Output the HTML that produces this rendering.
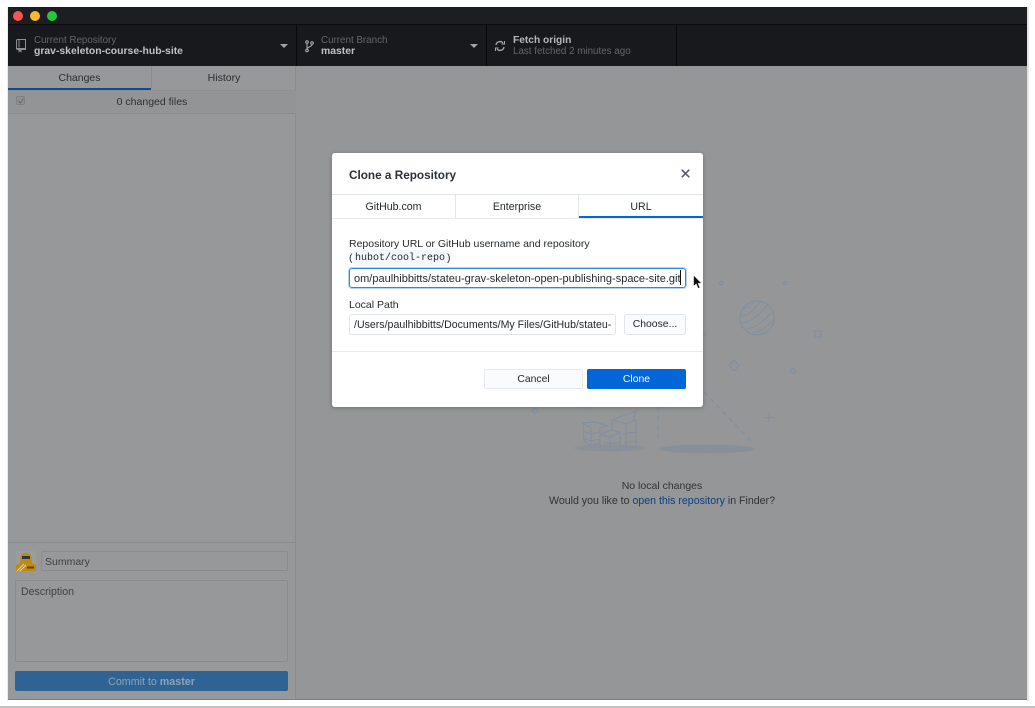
<!DOCTYPE html>
<html><head><meta charset="utf-8"><style>
*{box-sizing:border-box}
html,body{margin:0;padding:0;width:1035px;height:708px;overflow:hidden;background:#fff;font-family:"Liberation Sans",sans-serif}
.a{position:absolute;white-space:nowrap}
svg{position:absolute;overflow:visible}
</style></head><body>
<div class="a" style="left:0;top:706px;width:1035px;height:2px;background:#c4c4c4"></div>
<div class="a" style="left:1027px;top:7px;width:2px;height:694px;background:#e4e4e4"></div>
<div class="a" style="left:7px;top:7px;width:1px;height:694px;background:#ececec"></div>
<div class="a" id="win" style="left:8px;top:7px;width:1019px;height:693px;background:#959697;overflow:hidden">
<div class="a" style="left:0;top:0;width:1019px;height:17px;background:#1c1e22"></div>
<div class="a" style="left:0;top:17px;width:1019px;height:42px;background:#17191d;border-top:1px solid #0a0b0d"></div>
<div class="a" style="left:5px;top:4px;width:10px;height:10px;border-radius:50%;background:#f5554f"></div>
<div class="a" style="left:22px;top:4px;width:10px;height:10px;border-radius:50%;background:#f9bb2d"></div>
<div class="a" style="left:39px;top:4px;width:10px;height:10px;border-radius:50%;background:#27c63f"></div>
<div class="a" style="left:288px;top:17px;width:1px;height:42px;background:#08090a"></div>
<div class="a" style="left:478px;top:17px;width:1px;height:42px;background:#08090a"></div>
<div class="a" style="left:668px;top:17px;width:1px;height:42px;background:#08090a"></div>

<svg style="left:8px;top:32px" width="10" height="13" viewBox="0 0 10 13" fill="none" stroke="#8e9094" stroke-width="1"><path d="M.5 10V1.500a1 1 0 0 1 1-1h8v10h-9M3 .5v8M.5 9.500h9M3 10.500v2l1-1 1 1v-2"/></svg>
<div class="a" style="left:26px;top:28px;font-size:9.800px;line-height:12px;color:#63666b">Current Repository</div>
<div class="a" style="left:26px;top:38px;font-size:10.400px;line-height:13px;font-weight:bold;color:#c0c2c5">grav-skeleton-course-hub-site</div>
<div class="a" style="left:272px;top:37px;border:4px solid transparent;border-top:4px solid #a3a5a8;border-bottom:0"></div>
<svg style="left:297px;top:33px" width="9" height="13" viewBox="0 0 9 13" fill="none" stroke="#b0b2b5" stroke-width="1"><circle cx="2" cy="2" r="1.300"/><circle cx="7" cy="3" r="1.300"/><circle cx="2" cy="10.500" r="1.300"/><path d="M2 3.500v5.500M7 4.500c0 2.500-4.500 2-5 4.500"/></svg>
<div class="a" style="left:313px;top:28px;font-size:9.800px;line-height:12px;color:#63666b">Current Branch</div>
<div class="a" style="left:313px;top:38px;font-size:10.400px;line-height:13px;font-weight:bold;color:#c0c2c5">master</div>
<div class="a" style="left:462px;top:37px;border:4px solid transparent;border-top:4px solid #a3a5a8;border-bottom:0"></div>
<svg style="left:487px;top:33px" width="10" height="12" viewBox="0 0 10 12" fill="none" stroke="#a8aaad" stroke-width="1.300"><path d="M1 5A4 4 0 0 1 8 3M9 7A4 4 0 0 1 2 9"/><path d="M6.500 4H9.500V1M3.500 8H.5v3" stroke-width="1"/></svg>
<div class="a" style="left:505px;top:27px;font-size:10.200px;line-height:13px;font-weight:bold;color:#b6b8bb">Fetch origin</div>
<div class="a" style="left:505px;top:39px;font-size:9.800px;line-height:12px;color:#63666b">Last fetched 2 minutes ago</div>

<div class="a" style="left:0;top:59px;width:288px;height:634px;background:#979899;border-right:1px solid #8a8b8c"></div>
<div class="a" style="left:143px;top:59px;width:1px;height:23px;background:#8a8b8c"></div>
<div class="a" style="left:0;top:60px;width:143px;height:23px;text-align:center;font-size:10.500px;line-height:23px;color:#2b2c2e">Changes</div>
<div class="a" style="left:144px;top:60px;width:144px;height:23px;text-align:center;font-size:10.500px;line-height:23px;color:#2b2c2e">History</div>
<div class="a" style="left:0;top:81px;width:143px;height:2px;background:#0e4c92"></div>
<div class="a" style="left:0;top:83px;width:288px;height:24px;background:#939495;border-top:1px solid #8e8f90;border-bottom:1px solid #8a8b8c;text-align:center;font-size:10.500px;line-height:22px;color:#2f3032">0 changed files</div>
<div class="a" style="left:8px;top:89px;width:9px;height:9px;border:1px solid #808183;border-radius:2px;background:#8f9091"></div>
<svg style="left:9px;top:90px" width="8" height="8" viewBox="0 0 8 8" fill="none" stroke="#67686a"><path d="M1.500 4l2 2 3-4.500"/></svg>

<div class="a" style="left:0;top:535px;width:288px;height:1px;background:#8a8b8c"></div>
<div class="a" style="left:8px;top:544px;width:20px;height:20px;background:#9c9c9b;border-radius:2px"></div>
<svg style="left:8px;top:544px" width="20" height="20" viewBox="0 0 20 20"><path d="M5 4Q10 0 15 4L16 13H4Z" fill="#bd8a12"/><rect x="6" y="5" width="8" height="3" fill="#2f3440"/><path d="M0 20V14L5 12H15L20 14V20Z" fill="#bd8a12"/><path d="M1 20L8 13M4 20L10 14" stroke="#d8d4c4" stroke-width="1"/><rect x="11" y="15.500" width="7" height="2" fill="#5a470f"/></svg>
<div class="a" style="left:33px;top:544px;width:247px;height:20px;background:#979899;border:1px solid #8a8b8c;border-radius:2px;font-size:10.500px;line-height:20px;padding-left:3px;color:#3f4042">Summary</div>
<div class="a" style="left:7px;top:573px;width:273px;height:82px;background:#979899;border:1px solid #8a8b8c;border-radius:2px;font-size:10.600px;line-height:13px;padding:5px 5px;color:#3f4042">Description</div>
<div class="a" style="left:7px;top:664px;width:273px;height:20px;background:#2f6393;border-radius:2px;text-align:center;font-size:10.700px;line-height:22px;color:#8da4b9">Commit to <b>master</b></div>

<svg style="left:504px;top:262px" width="320" height="190" viewBox="512 269 320 190" fill="none" stroke="#7e8fa3" stroke-width="1">
<ellipse cx="707" cy="449" rx="48" ry="4.500" fill="#889097" stroke="none"/>
<ellipse cx="610" cy="448" rx="36" ry="3.500" fill="#8c9196" stroke="none"/>
<circle cx="721" cy="283" r="1.700"/><circle cx="785" cy="283" r="1.500"/><circle cx="704" cy="334" r="1.500"/>
<circle cx="757" cy="318" r="17"/><path d="M743 309q6-1 12-9M741 316q10-1 20-15M742 323q12-1 25-18M746 329q12-1 25-16M753 333q10-2 19-12" stroke-width=".8"/>
<rect x="815" y="331" width="6" height="6"/><path d="M813 331h3M820 331h3M813 337h3M820 337h3" stroke-width=".7"/>
<path d="M734 360l5 5.500-5 5.500-5-5.500zM793 368l3 3-3 3-3-3zM535 408l3 3-3 3-3-3z"/>
<path d="M769 413v9M765 417.500h9"/>
<path d="M658 407v32M704 392l47 49" stroke-dasharray="5 4"/>
<path d="M580 407h3M588 408h3"/>
<path d="M583 423l13-1 11 4-7 2v15l-9 3-7-5zM583 423l8 5v18M583 431l8 3 9-2M583 438l8 3 9-2"/>
<path d="M600 435l10-5 10 2v18l-10 1-10-2zM600 435l10 2 10-5M610 437v14M603 443h16"/>
<path d="M612 420l24-9-3 9 3 0v27l-10 2M612 420l14 4 10-4M612 420v10M626 424v26M622 434l14-2M624 443l12-2"/>
</svg>
<div class="a" style="left:514px;top:472px;width:280px;text-align:center;font-size:10.500px;line-height:14px;color:#303234">No local changes</div>
<div class="a" style="left:514px;top:487px;width:280px;text-align:center;font-size:10.600px;line-height:14px;color:#303234">Would you like to <span style="color:#0b3f80">open this repository</span> in Finder?</div>
<div class="a" style="left:0;top:692px;width:1019px;height:1px;background:#7d7e7f"></div>
</div>

<div class="a" style="left:332px;top:153px;width:371px;height:254px;background:#fff;border-radius:3px;box-shadow:0 1px 4px rgba(0,0,0,.25)">
<div class="a" style="left:17px;top:15px;font-size:11.750px;line-height:15px;font-weight:bold;color:#2b3036">Clone a Repository</div>
<svg style="left:349px;top:16px" width="9" height="9" viewBox="0 0 9 9" stroke="#555b62" stroke-width="1.500"><path d="M.7.7l7.600 7.600M8.300.7L.7 8.300"/></svg>
<div class="a" style="left:0;top:41px;width:371px;height:1px;background:#e1e4e8"></div>
<div class="a" style="left:0;top:65px;width:371px;height:1px;background:#e8eaed"></div>
<div class="a" style="left:123px;top:41px;width:1px;height:24px;background:#e1e4e8"></div>
<div class="a" style="left:246px;top:41px;width:1px;height:24px;background:#e1e4e8"></div>
<div class="a" style="left:0;top:43px;width:123px;height:23px;text-align:center;font-size:10.600px;line-height:23px;color:#24292e">GitHub.com</div>
<div class="a" style="left:124px;top:43px;width:122px;height:23px;text-align:center;font-size:10.600px;line-height:23px;color:#24292e">Enterprise</div>
<div class="a" style="left:247px;top:43px;width:124px;height:23px;text-align:center;font-size:10.600px;line-height:23px;color:#24292e">URL</div>
<div class="a" style="left:247px;top:63px;width:124px;height:2px;background:#0366d6"></div>
<div class="a" style="left:17px;top:84px;font-size:10.500px;line-height:14px;color:#24292e">Repository URL or GitHub username and repository</div>
<div class="a" style="left:17px;top:98px;font-size:10.500px;line-height:14px;color:#24292e">(</div>
<div class="a" style="left:22px;top:97px;width:95px;height:16px;background:#f4f8fb;border-radius:3px;font-family:'Liberation Mono',monospace;font-size:10px;line-height:17px;padding-left:1px;color:#24292e">hubot/cool-repo</div>
<div class="a" style="left:115px;top:98px;font-size:10.500px;line-height:14px;color:#24292e">)</div>
<div class="a" style="left:17px;top:115px;width:337px;height:20px;border:1px solid #2f86e8;border-radius:3px;box-shadow:0 0 0 1px #b5d4f5;font-size:11px;line-height:20px;padding-left:4px;color:#24292e;overflow:hidden">om/paulhibbitts/stateu-grav-skeleton-open-publishing-space-site.git</div>
<div class="a" style="left:348px;top:117px;width:1px;height:15px;background:#111"></div>
<div class="a" style="left:17px;top:145px;font-size:10.500px;line-height:14px;color:#24292e">Local Path</div>
<div class="a" style="left:17px;top:161px;width:267px;height:21px;border:1px solid #e1e4e8;border-radius:3px;font-size:10.600px;line-height:20px;padding-left:4px;color:#24292e;overflow:hidden">/Users/paulhibbitts/Documents/My Files/GitHub/stateu-</div>
<div class="a" style="left:292px;top:161px;width:62px;height:21px;border:1px solid #e1e4e8;border-radius:3px;background:#fafbfc;text-align:center;font-size:10.400px;line-height:20px;color:#24292e">Choose...</div>
<div class="a" style="left:0;top:198px;width:371px;height:1px;background:#e8eaed"></div>
<div class="a" style="left:152px;top:216px;width:99px;height:20px;border:1px solid #e8eaed;border-radius:2px;background:#fafbfc;text-align:center;font-size:10.400px;line-height:20px;color:#24292e">Cancel</div>
<div class="a" style="left:255px;top:216px;width:99px;height:20px;border-radius:2px;background:#0366d6;text-align:center;font-size:10.400px;line-height:22px;color:#fff">Clone</div>
</div>
<svg style="left:692px;top:274px" width="11" height="16" viewBox="0 0 11 16"><path d="M1.500 1v11.500l2.700-2.500 1.800 4.500 2-.8-1.800-4.300h3.600z" fill="#111" stroke="#fff" stroke-width=".6"/></svg>
</body></html>
